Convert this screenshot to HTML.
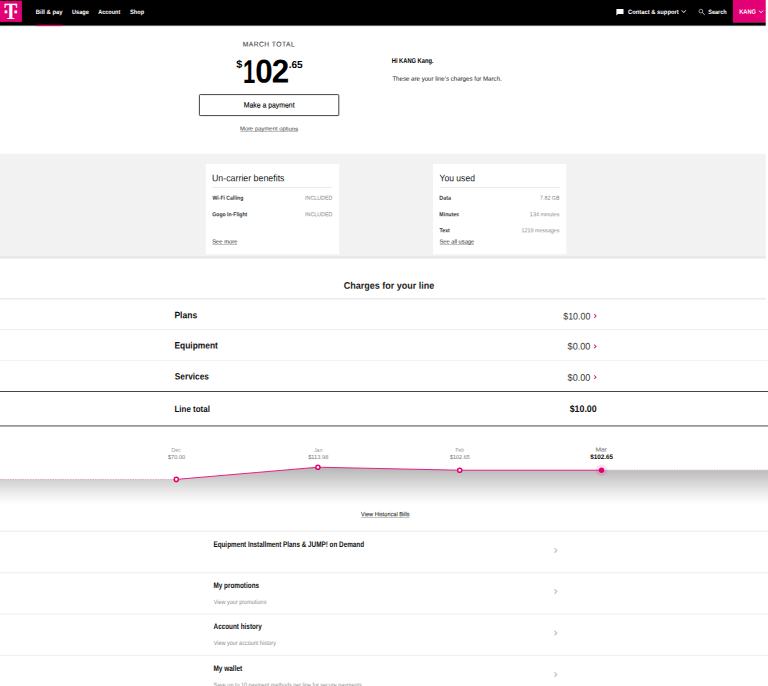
<!DOCTYPE html>
<html lang="en"><head><meta charset="utf-8"><title>T-Mobile | My bill</title>
<style>
html,body{margin:0;padding:0;background:#fff;}
body{width:768px;height:686px;overflow:hidden;font-family:"Liberation Sans",sans-serif;}
#page{display:block;position:relative;width:768px;height:686px;overflow:hidden;background:#fff;}
#page svg{position:absolute;left:0;top:0;display:block;}
text{white-space:pre;}

</style></head>
<body>
<main id="page">
<svg width="768" height="686" viewBox="0 0 768 686">
  <defs>
    <linearGradient id="g" x1="0" y1="467.3" x2="0" y2="505" gradientUnits="userSpaceOnUse">
      <stop offset="0" stop-color="#b6b6b6"/>
      <stop offset="0.4" stop-color="#d6d6d6"/>
      <stop offset="0.7" stop-color="#eeeeee"/>
      <stop offset="1" stop-color="#ffffff"/>
    </linearGradient>
    <linearGradient id="ns" x1="0" y1="0" x2="0" y2="1">
      <stop offset="0" stop-color="#000" stop-opacity="0.25"/>
      <stop offset="1" stop-color="#000" stop-opacity="0"/>
    </linearGradient>
  </defs>

  <g id="nav">
    <rect x="0" y="25.6" width="765.7" height="1.2" fill="url(#ns)"/>
    <rect x="0" y="0" width="733.2" height="25.6" fill="#000"/>
    <rect x="733" y="22.2" width="32.7" height="3.4" fill="#000"/>
    <rect x="0" y="0.8" width="21.9" height="21.1" fill="#e20074"/>
    <rect x="4.6" y="10.4" width="2.7" height="2.9" fill="#fff"/>
    <rect x="14.4" y="10.4" width="2.7" height="2.9" fill="#fff"/>
    <rect x="36" y="24.8" width="26.4" height="1.3" fill="#e20074"/>
    <rect x="732.9" y="0" width="32.8" height="22.4" fill="#e20074"/>
    <path d="M616.4 9.1 h7.1 v4.9 h-5.5 l-1.6 1.5 z" fill="#fff"/>
    <path d="M681.8 10.3 l2 2.3 l2 -2.3" fill="none" stroke="#fff" stroke-width="0.95"/>
    <circle cx="700.9" cy="11.1" r="1.85" fill="none" stroke="#e8e4dc" stroke-width="0.65"/>
    <path d="M702.3 12.6 l2.4 2.2" stroke="#e8e4dc" stroke-width="0.85"/>
    <path d="M759 10.6 l2 2.2 l2 -2.2" fill="none" stroke="#fff" stroke-width="0.95"/>
<text transform="translate(4.28 19.20) rotate(0.03) scale(0.847 1)" font-family="Liberation Serif, serif" font-size="23.20" font-weight="700" fill="#fff">T</text>
<text transform="translate(35.85 14.00) rotate(0.03) scale(0.931 1)" font-family="Liberation Sans, sans-serif" font-size="6.30" font-weight="700" fill="#fff">Bill &amp; pay</text>
<text transform="translate(71.97 14.00) rotate(0.03) scale(0.893 1)" font-family="Liberation Sans, sans-serif" font-size="6.30" font-weight="700" fill="#fff">Usage</text>
<text transform="translate(98.19 14.00) rotate(0.03) scale(0.880 1)" font-family="Liberation Sans, sans-serif" font-size="6.30" font-weight="700" fill="#fff">Account</text>
<text transform="translate(130.08 14.00) rotate(0.03) scale(0.898 1)" font-family="Liberation Sans, sans-serif" font-size="6.30" font-weight="700" fill="#fff">Shop</text>
<text transform="translate(628.07 14.00) rotate(0.03) scale(0.924 1)" font-family="Liberation Sans, sans-serif" font-size="6.30" font-weight="700" fill="#fff">Contact &amp; support</text>
<text transform="translate(708.28 14.00) rotate(0.03) scale(0.874 1)" font-family="Liberation Sans, sans-serif" font-size="6.30" font-weight="700" fill="#fff">Search</text>
<text transform="translate(739.16 13.80) rotate(0.03) scale(0.907 1)" font-family="Liberation Sans, sans-serif" font-size="6.30" font-weight="700" fill="#fff">KANG</text>
  </g>

  <g id="summary">
    <rect x="199.4" y="94.6" width="139.4" height="21" rx="0.8" fill="#fff" stroke="#2e2e2e" stroke-width="0.9"/>
<text transform="translate(242.70 46.40) rotate(0.03) scale(0.957 1)" font-family="Liberation Sans, sans-serif" font-size="7.00" letter-spacing="0.5" fill="#4a4a4a" stroke="#4a4a4a" stroke-width="0.12">MARCH TOTAL</text>
<text transform="translate(236.37 67.85) rotate(0.03) scale(1.013 1)" font-family="Liberation Sans, sans-serif" font-size="10.71" font-weight="700" fill="#000">$</text>
<text transform="translate(244.40 82.55) rotate(0.03) scale(0.952 1)" font-family="Liberation Sans, sans-serif" font-size="32.96" font-weight="700" fill="#000" x="-1.49 11.36 28.82"><tspan textLength="12.88" lengthAdjust="spacingAndGlyphs">1</tspan>02</text>
<text transform="translate(288.68 67.88) rotate(0.03) scale(0.998 1)" font-family="Liberation Sans, sans-serif" font-size="10.09" font-weight="700" fill="#000">.65</text>
<text transform="translate(243.68 107.50) rotate(0.03) scale(0.920 1)" font-family="Liberation Sans, sans-serif" font-size="7.50" fill="#000" stroke="#000" stroke-width="0.12">Make a payment</text>
<text transform="translate(239.98 130.60) rotate(0.03) scale(1.034 1)" font-family="Liberation Sans, sans-serif" font-size="5.70" fill="#333">More payment options</text><rect x="240.50" y="131.35" width="57.50" height="0.45" fill="#777"/>
<text transform="translate(391.79 63.30) rotate(0.03) scale(0.822 1)" font-family="Liberation Sans, sans-serif" font-size="7.00" font-weight="700" fill="#000">Hi KANG Kang.</text>
<text transform="translate(392.38 80.70) rotate(0.03) scale(0.974 1)" font-family="Liberation Sans, sans-serif" font-size="6.30" fill="#111">These are your line&#x27;s charges for March.</text>
  </g>

  <g id="cards">
    <rect x="0" y="153.7" width="765.8" height="102.4" fill="#f2f2f2"/>
    <rect x="0" y="256" width="765.8" height="2.7" fill="#e9e9e9"/>
    <g id="benefits">
      <rect x="205.8" y="163.9" width="133.4" height="90.4" fill="#fff"/>
      <rect x="212.5" y="187" width="120" height="0.6" fill="#dcdcdc"/>
<text transform="translate(212.00 181.30) rotate(0.03) scale(0.938 1)" font-family="Liberation Sans, sans-serif" font-size="9.40" fill="#222">Un-carrier benefits</text>
<text transform="translate(212.50 199.80) rotate(0.03) scale(0.881 1)" font-family="Liberation Sans, sans-serif" font-size="5.80" font-weight="700" fill="#333">Wi-Fi Calling</text>
<text transform="translate(305.03 199.80) rotate(0.03) scale(0.941 1)" font-family="Liberation Sans, sans-serif" font-size="5.70" fill="#888">INCLUDED</text>
<text transform="translate(212.28 216.30) rotate(0.03) scale(0.884 1)" font-family="Liberation Sans, sans-serif" font-size="5.80" font-weight="700" fill="#333">Gogo In-Flight</text>
<text transform="translate(305.03 216.30) rotate(0.03) scale(0.941 1)" font-family="Liberation Sans, sans-serif" font-size="5.70" fill="#888">INCLUDED</text>
<text transform="translate(212.25 243.50) rotate(0.03) scale(1.003 1)" font-family="Liberation Sans, sans-serif" font-size="5.80" fill="#222">See more</text><rect x="212.50" y="244.25" width="24.70" height="0.45" fill="#777"/>
    </g>
    <g id="usage">
      <rect x="433" y="163.9" width="133.4" height="90.4" fill="#fff"/>
      <rect x="439.7" y="187" width="120" height="0.6" fill="#dcdcdc"/>
<text transform="translate(439.47 181.30) rotate(0.03) scale(0.914 1)" font-family="Liberation Sans, sans-serif" font-size="9.40" fill="#222">You used</text>
<text transform="translate(439.35 199.80) rotate(0.03) scale(0.922 1)" font-family="Liberation Sans, sans-serif" font-size="5.80" font-weight="700" fill="#333">Data</text>
<text transform="translate(539.97 199.80) rotate(0.03) scale(0.937 1)" font-family="Liberation Sans, sans-serif" font-size="5.70" fill="#888">7.82 GB</text>
<text transform="translate(439.36 216.30) rotate(0.03) scale(0.899 1)" font-family="Liberation Sans, sans-serif" font-size="5.80" font-weight="700" fill="#333">Minutes</text>
<text transform="translate(529.84 216.30) rotate(0.03) scale(0.958 1)" font-family="Liberation Sans, sans-serif" font-size="5.70" fill="#888">134 minutes</text>
<text transform="translate(439.59 232.30) rotate(0.03) scale(0.889 1)" font-family="Liberation Sans, sans-serif" font-size="5.80" font-weight="700" fill="#333">Text</text>
<text transform="translate(521.45 232.30) rotate(0.03) scale(0.946 1)" font-family="Liberation Sans, sans-serif" font-size="5.70" fill="#888">1219 messages</text>
<text transform="translate(439.45 243.50) rotate(0.03) scale(0.991 1)" font-family="Liberation Sans, sans-serif" font-size="5.80" fill="#222">See all usage</text><rect x="439.70" y="244.25" width="34.30" height="0.45" fill="#777"/>
    </g>
  </g>

  <g id="charges">
    <rect x="0" y="297.9" width="765.7" height="1.8" fill="#ededed"/>
    <rect x="0" y="329" width="768" height="0.9" fill="#efefef"/>
    <rect x="0" y="360" width="768" height="0.9" fill="#f1f1f1"/>
    <rect x="0" y="391" width="768" height="1" fill="#444"/>
    <rect x="0" y="425" width="768" height="1.8" fill="#999"/>
    <g fill="none" stroke="#e20074" stroke-width="1.05" opacity="0.88">
      <path d="M594.3 314.2 l1.75 1.8 l-1.75 1.8"/>
      <path d="M594.3 344.6 l1.75 1.8 l-1.75 1.8"/>
      <path d="M594.3 375.4 l1.75 1.8 l-1.75 1.8"/>
    </g>
<text transform="translate(343.65 288.80) rotate(0.03) scale(0.940 1)" font-family="Liberation Sans, sans-serif" font-size="9.60" font-weight="700" fill="#222">Charges for your line</text>
<text transform="translate(174.43 318.30) rotate(0.03) scale(0.918 1)" font-family="Liberation Sans, sans-serif" font-size="9.30" font-weight="700" fill="#111">Plans</text>
<text transform="translate(174.43 348.50) rotate(0.03) scale(0.906 1)" font-family="Liberation Sans, sans-serif" font-size="9.30" font-weight="700" fill="#111">Equipment</text>
<text transform="translate(174.78 379.40) rotate(0.03) scale(0.893 1)" font-family="Liberation Sans, sans-serif" font-size="9.30" font-weight="700" fill="#111">Services</text>
<text transform="translate(174.45 412.10) rotate(0.03) scale(0.888 1)" font-family="Liberation Sans, sans-serif" font-size="9.00" font-weight="700" fill="#111">Line total</text>
<text transform="translate(563.28 319.40) rotate(0.03) scale(0.921 1)" font-family="Liberation Sans, sans-serif" font-size="9.60" fill="#333">$10.00</text>
<text transform="translate(567.58 349.60) rotate(0.03) scale(0.949 1)" font-family="Liberation Sans, sans-serif" font-size="9.60" fill="#333">$0.00</text>
<text transform="translate(567.58 380.70) rotate(0.03) scale(0.949 1)" font-family="Liberation Sans, sans-serif" font-size="9.60" fill="#333">$0.00</text>
<text transform="translate(569.68 412.10) rotate(0.03) scale(0.921 1)" font-family="Liberation Sans, sans-serif" font-size="9.60" font-weight="700" fill="#111">$10.00</text>
  </g>

  <g id="history">
    <path d="M0 479.4 L176.3 479.4 L317.9 467.2 L459.7 470.2 L601.5 470.2 L768 470.2 L768 506 L0 506 Z" fill="url(#g)"/>
    <path d="M0 479.4 H176.3" stroke="#d02c7c" stroke-width="0.7" stroke-dasharray="1.6 0.9" opacity="0.5"/>
    <path d="M601.5 470 H768" stroke="#c0588c" stroke-width="0.7" stroke-dasharray="1.6 0.9" opacity="0.45"/>
    <path d="M176.3 479.4 L317.9 467.2 L459.7 470.2 L601.5 470.2" fill="none" stroke="#e20074" stroke-width="0.85"/>
    <circle cx="176.3" cy="479.4" r="2.05" fill="#fff" stroke="#e20074" stroke-width="1.5"/>
    <circle cx="317.9" cy="467.2" r="2.05" fill="#fff" stroke="#e20074" stroke-width="1.5"/>
    <circle cx="459.7" cy="470.2" r="2.05" fill="#fff" stroke="#e20074" stroke-width="1.5"/>
    <circle cx="601.5" cy="470.2" r="5.9" fill="#e20074" opacity="0.1"/>
    <circle cx="601.5" cy="470.2" r="2.7" fill="#e20074"/>
<text transform="translate(171.41 451.80) rotate(0.03) scale(0.978 1)" font-family="Liberation Sans, sans-serif" font-size="5.40" fill="#999">Dec</text>
<text transform="translate(167.98 459.00) rotate(0.03) scale(0.953 1)" font-family="Liberation Sans, sans-serif" font-size="5.90" fill="#777">$70.00</text>
<text transform="translate(313.88 451.90) rotate(0.03) scale(0.982 1)" font-family="Liberation Sans, sans-serif" font-size="5.40" fill="#999">Jan</text>
<text transform="translate(308.13 458.90) rotate(0.03) scale(0.968 1)" font-family="Liberation Sans, sans-serif" font-size="5.90" fill="#777">$113.98</text>
<text transform="translate(455.44 451.80) rotate(0.03) scale(0.916 1)" font-family="Liberation Sans, sans-serif" font-size="5.40" fill="#999">Feb</text>
<text transform="translate(449.88 458.90) rotate(0.03) scale(0.940 1)" font-family="Liberation Sans, sans-serif" font-size="5.90" fill="#777">$102.65</text>
<text transform="translate(595.54 451.60) rotate(0.03) scale(1.118 1)" font-family="Liberation Sans, sans-serif" font-size="6.00" fill="#666">Mar</text>
<text transform="translate(590.13 459.10) rotate(0.03) scale(0.979 1)" font-family="Liberation Sans, sans-serif" font-size="6.50" font-weight="700" fill="#111">$102.65</text>
<text transform="translate(361.09 516.30) rotate(0.03) scale(0.892 1)" font-family="Liberation Sans, sans-serif" font-size="6.30" fill="#222" stroke="#222" stroke-width="0.08">View Historical Bills</text><rect x="361.20" y="517.05" width="48.30" height="0.45" fill="#777"/>
  </g>

  <g id="links">
    <rect x="0" y="530.7" width="768" height="1.2" fill="#eeeeee"/>
    <rect x="0" y="572.2" width="768" height="1.2" fill="#f0f0f0"/>
    <rect x="0" y="613.6" width="768" height="1.2" fill="#f0f0f0"/>
    <rect x="0" y="654.8" width="768" height="1.2" fill="#f0f0f0"/>
    <g fill="none" stroke="#c2c4c8" stroke-width="1.3">
      <path d="M554.5 548.1 l2.2 2.3 l-2.2 2.3"/>
      <path d="M554.5 589.3 l2.2 2.3 l-2.2 2.3"/>
      <path d="M554.5 630.7 l2.2 2.3 l-2.2 2.3"/>
      <path d="M554.5 672.1 l2.2 2.3 l-2.2 2.3"/>
    </g>
<text transform="translate(213.41 546.50) rotate(0.03) scale(0.783 1)" font-family="Liberation Sans, sans-serif" font-size="8.10" font-weight="700" fill="#111">Equipment Installment Plans &amp; JUMP! on Demand</text>
<text transform="translate(213.41 588.00) rotate(0.03) scale(0.788 1)" font-family="Liberation Sans, sans-serif" font-size="8.10" font-weight="700" fill="#111">My promotions</text>
<text transform="translate(213.69 603.80) rotate(0.03) scale(0.873 1)" font-family="Liberation Sans, sans-serif" font-size="6.30" fill="#8c8c8c">View your promotions</text>
<text transform="translate(213.60 629.20) rotate(0.03) scale(0.784 1)" font-family="Liberation Sans, sans-serif" font-size="8.10" font-weight="700" fill="#111">Account history</text>
<text transform="translate(213.69 645.20) rotate(0.03) scale(0.870 1)" font-family="Liberation Sans, sans-serif" font-size="6.30" fill="#8c8c8c">View your account history</text>
<text transform="translate(213.40 670.70) rotate(0.03) scale(0.803 1)" font-family="Liberation Sans, sans-serif" font-size="8.10" font-weight="700" fill="#111">My wallet</text>
<text transform="translate(213.48 686.50) rotate(0.03) scale(0.864 1)" font-family="Liberation Sans, sans-serif" font-size="6.30" fill="#8c8c8c">Save up to 10 payment methods per line for secure payments.</text>
  </g>
</svg>

</main>
</body></html>
